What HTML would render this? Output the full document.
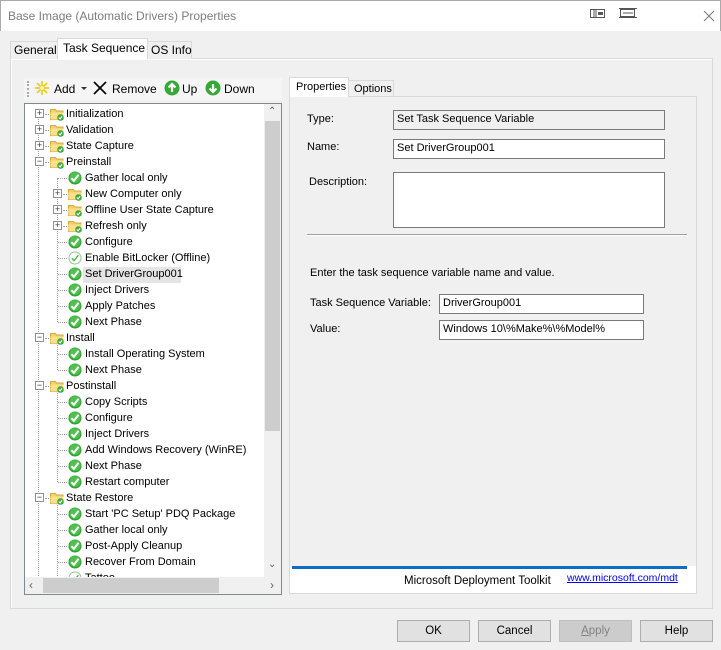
<!DOCTYPE html>
<html><head><meta charset="utf-8"><style>
*{box-sizing:border-box}
body{margin:0;width:721px;height:650px;background:#f0f0f0;font-family:"Liberation Sans",sans-serif;font-size:11px;color:#000;position:relative;overflow:hidden}
.a{position:absolute;white-space:nowrap}
.tb{left:0;top:0;width:721px;height:31px;background:#fff;border:1px solid #aaa;border-bottom:none}
.row{position:absolute;height:16px;line-height:16px;white-space:nowrap}
.box{position:absolute;width:9px;height:9px;border:1px solid #919191;background:#fff;font-size:9px;line-height:7px;text-align:center;color:#333}
.in{background:#fff;border:1px solid #7a7a7a;padding-left:3px;line-height:17px}
.btn{position:absolute;top:620px;width:73px;height:22px;border:1px solid #adadad;background:#e1e1e1;text-align:center;line-height:20px;font-size:11.5px}
.dl{position:absolute;border-left:1px dotted #a0a0a0}
.dh{position:absolute;border-top:1px dotted #a0a0a0;width:6px}
</style></head><body>
<svg width="0" height="0" style="position:absolute"><defs>
<symbol id="ck" viewBox="0 0 14 14"><circle cx="7" cy="7" r="6.5" fill="#2e9e2e"/><circle cx="7" cy="6.5" r="5.5" fill="#4cc24c"/><path d="M3.5 7.2l2.3 2.6 4.8-6" stroke="#fff" stroke-width="2" fill="none"/></symbol>
<symbol id="ck2" viewBox="0 0 14 14"><circle cx="7" cy="7" r="6" fill="#fff" stroke="#8fc88f"/><path d="M3.8 7.2l2.2 2.4 4.4-5.4" stroke="#4caf4c" stroke-width="1.3" fill="none"/></symbol>
<symbol id="fd" viewBox="0 0 14 14"><path d="M0.5 2.5h5l1 1.5h6.5v8.5h-12.5z" fill="#f2cf68" stroke="#d7a93a"/><path d="M0.5 5.5h13v7h-13z" fill="#fbe08a"/><circle cx="10.5" cy="10.5" r="3.3" fill="#3aaa3a"/><path d="M8.8 10.5l1.3 1.3 2-2.4" stroke="#fff" stroke-width="1.2" fill="none"/></symbol>
</defs></svg>
<div class="a tb"></div>
<div class="a" style="left:8px;top:9px;font-size:12px;color:#7d7d7d">Base Image (Automatic Drivers) Properties</div>
<svg class="a" style="left:590px;top:8px" width="16" height="12"><rect x="0.5" y="1.5" width="14" height="8" fill="none" stroke="#555"/><path d="M4 2v7M6 2v7" stroke="#555"/><rect x="8" y="4" width="5" height="3" fill="#555"/></svg>
<svg class="a" style="left:619px;top:7px" width="18" height="12"><rect x="1.5" y="2.5" width="14" height="7" fill="none" stroke="#555"/><path d="M0 1.5h18M0 10.5h18M4 6h10" stroke="#555"/></svg>
<svg class="a" style="left:703px;top:10px" width="12" height="12"><path d="M1 1l10 10M11 1l-10 10" stroke="#777"/></svg>
<div class="a" style="left:10px;top:58px;width:703px;height:551px;border:1px solid #d9d9d9;background:#f0f0f0;box-shadow:inset 1px 1px 0 #fff"></div>
<div class="a" style="left:10px;top:41px;width:48px;height:18px;border:1px solid #d9d9d9;border-bottom:none;background:#f0f0f0;line-height:17px;padding-left:3px;font-size:12px">General</div>
<div class="a" style="left:147px;top:41px;width:45px;height:18px;border:1px solid #d9d9d9;border-bottom:none;background:#f0f0f0;line-height:17px;padding-left:3px;font-size:12px">OS Info</div>
<div class="a" style="left:57px;top:38px;width:91px;height:21px;border:1px solid #d9d9d9;border-bottom:none;background:#fff;line-height:18px;padding-left:5px;font-size:12px">Task Sequence</div>
<div class="a" style="left:24px;top:78px;width:258px;height:22px;background:#f5f5f5"></div>
<div class="a" style="left:27px;top:81px;height:16px;border-left:2px dotted #aaa"></div>
<svg class="a" style="left:34px;top:80px" width="16" height="16"><path d="M8 1v14M1 8h14M3 3l10 10M13 3l-10 10" stroke="#e8c800" stroke-width="1.5"/><circle cx="8" cy="8" r="2" fill="#fff7a0"/></svg>
<div class="a" style="left:54px;top:82px;font-size:12px">Add</div>
<div class="a" style="left:81px;top:87px;border:3px solid transparent;border-top:3px solid #333"></div>
<svg class="a" style="left:93px;top:81px" width="14" height="14"><path d="M1 1l12 12M13 1l-12 12" stroke="#000" stroke-width="1.6"/></svg>
<div class="a" style="left:112px;top:82px;font-size:12px">Remove</div>
<svg class="a" style="left:164px;top:80px" width="16" height="16"><circle cx="8" cy="8" r="7.5" fill="#36a836"/><path d="M8 12V4M4.5 7.5L8 4l3.5 3.5" stroke="#fff" stroke-width="2.2" fill="none"/></svg>
<div class="a" style="left:182px;top:82px;font-size:12px">Up</div>
<svg class="a" style="left:205px;top:80px" width="16" height="16"><circle cx="8" cy="8" r="7.5" fill="#36a836"/><path d="M8 4v8M4.5 8.5L8 12l3.5-3.5" stroke="#fff" stroke-width="2.2" fill="none"/></svg>
<div class="a" style="left:224px;top:82px;font-size:12px">Down</div>
<div class="a" style="left:24px;top:103px;width:258px;height:492px;border:1px solid #828790;background:#fff;overflow:hidden">
<div class="a" style="left:0;top:0;width:240px;height:473px;overflow:hidden">
<div class="dl" style="left:13px;top:10px;height:470px"></div>
<div class="dl" style="left:32px;top:74px;height:144px"></div>
<div class="dl" style="left:32px;top:234px;height:32px"></div>
<div class="dl" style="left:32px;top:282px;height:96px"></div>
<div class="dl" style="left:32px;top:394px;height:80px"></div>
<div class="a" style="left:58px;top:163px;width:98px;height:16px;background:#e5e5e5"></div>
</div>
<div class="a" style="left:239px;top:0;width:17px;height:473px;background:#f0f0f0"></div>
<div class="a" style="left:240px;top:17px;width:15px;height:310px;background:#cdcdcd"></div>
<div class="a" style="left:243px;top:2px;font-size:10px;color:#606060">&#8963;</div>
<div class="a" style="left:243px;top:455px;font-size:10px;color:#606060">&#8964;</div>
<div class="a" style="left:0;top:473px;width:256px;height:17px;background:#f0f0f0"></div>
<div class="a" style="left:18px;top:474px;width:176px;height:15px;background:#cdcdcd"></div>
<div class="a" style="left:4px;top:474px;font-size:12px;color:#606060">&#8249;</div>
<div class="a" style="left:245px;top:474px;font-size:12px;color:#606060">&#8250;</div>
</div>
<div class="a" style="left:25px;top:104px;width:238px;height:473px;overflow:hidden">
<div class="row" style="top:2px;left:10px"><span class="box" style="left:0;top:3px">+</span><span class="dh" style="left:10px;top:8px"></span><svg class="a" style="left:15px;top:1px" width="14" height="14"><use href="#fd"/></svg><span class="a" style="left:31px">Initialization</span></div>
<div class="row" style="top:18px;left:10px"><span class="box" style="left:0;top:3px">+</span><span class="dh" style="left:10px;top:8px"></span><svg class="a" style="left:15px;top:1px" width="14" height="14"><use href="#fd"/></svg><span class="a" style="left:31px">Validation</span></div>
<div class="row" style="top:34px;left:10px"><span class="box" style="left:0;top:3px">+</span><span class="dh" style="left:10px;top:8px"></span><svg class="a" style="left:15px;top:1px" width="14" height="14"><use href="#fd"/></svg><span class="a" style="left:31px">State Capture</span></div>
<div class="row" style="top:50px;left:10px"><span class="box" style="left:0;top:3px">&minus;</span><span class="dh" style="left:10px;top:8px"></span><svg class="a" style="left:15px;top:1px" width="14" height="14"><use href="#fd"/></svg><span class="a" style="left:31px">Preinstall</span></div>
<div class="row" style="top:66px;left:33px"><span class="dh" style="left:0;top:8px;width:9px"></span><svg class="a" style="left:10px;top:1px" width="14" height="14"><use href="#ck"/></svg><span class="a" style="left:27px">Gather local only</span></div>
<div class="row" style="top:82px;left:28px"><span class="box" style="left:0;top:3px">+</span><span class="dh" style="left:10px;top:8px"></span><svg class="a" style="left:15px;top:1px" width="14" height="14"><use href="#fd"/></svg><span class="a" style="left:32px">New Computer only</span></div>
<div class="row" style="top:98px;left:28px"><span class="box" style="left:0;top:3px">+</span><span class="dh" style="left:10px;top:8px"></span><svg class="a" style="left:15px;top:1px" width="14" height="14"><use href="#fd"/></svg><span class="a" style="left:32px">Offline User State Capture</span></div>
<div class="row" style="top:114px;left:28px"><span class="box" style="left:0;top:3px">+</span><span class="dh" style="left:10px;top:8px"></span><svg class="a" style="left:15px;top:1px" width="14" height="14"><use href="#fd"/></svg><span class="a" style="left:32px">Refresh only</span></div>
<div class="row" style="top:130px;left:33px"><span class="dh" style="left:0;top:8px;width:9px"></span><svg class="a" style="left:10px;top:1px" width="14" height="14"><use href="#ck"/></svg><span class="a" style="left:27px">Configure</span></div>
<div class="row" style="top:146px;left:33px"><span class="dh" style="left:0;top:8px;width:9px"></span><svg class="a" style="left:10px;top:1px" width="14" height="14"><use href="#ck2"/></svg><span class="a" style="left:27px">Enable BitLocker (Offline)</span></div>
<div class="row" style="top:162px;left:33px"><span class="dh" style="left:0;top:8px;width:9px"></span><svg class="a" style="left:10px;top:1px" width="14" height="14"><use href="#ck"/></svg><span class="a" style="left:27px">Set DriverGroup001</span></div>
<div class="row" style="top:178px;left:33px"><span class="dh" style="left:0;top:8px;width:9px"></span><svg class="a" style="left:10px;top:1px" width="14" height="14"><use href="#ck"/></svg><span class="a" style="left:27px">Inject Drivers</span></div>
<div class="row" style="top:194px;left:33px"><span class="dh" style="left:0;top:8px;width:9px"></span><svg class="a" style="left:10px;top:1px" width="14" height="14"><use href="#ck"/></svg><span class="a" style="left:27px">Apply Patches</span></div>
<div class="row" style="top:210px;left:33px"><span class="dh" style="left:0;top:8px;width:9px"></span><svg class="a" style="left:10px;top:1px" width="14" height="14"><use href="#ck"/></svg><span class="a" style="left:27px">Next Phase</span></div>
<div class="row" style="top:226px;left:10px"><span class="box" style="left:0;top:3px">&minus;</span><span class="dh" style="left:10px;top:8px"></span><svg class="a" style="left:15px;top:1px" width="14" height="14"><use href="#fd"/></svg><span class="a" style="left:31px">Install</span></div>
<div class="row" style="top:242px;left:33px"><span class="dh" style="left:0;top:8px;width:9px"></span><svg class="a" style="left:10px;top:1px" width="14" height="14"><use href="#ck"/></svg><span class="a" style="left:27px">Install Operating System</span></div>
<div class="row" style="top:258px;left:33px"><span class="dh" style="left:0;top:8px;width:9px"></span><svg class="a" style="left:10px;top:1px" width="14" height="14"><use href="#ck"/></svg><span class="a" style="left:27px">Next Phase</span></div>
<div class="row" style="top:274px;left:10px"><span class="box" style="left:0;top:3px">&minus;</span><span class="dh" style="left:10px;top:8px"></span><svg class="a" style="left:15px;top:1px" width="14" height="14"><use href="#fd"/></svg><span class="a" style="left:31px">Postinstall</span></div>
<div class="row" style="top:290px;left:33px"><span class="dh" style="left:0;top:8px;width:9px"></span><svg class="a" style="left:10px;top:1px" width="14" height="14"><use href="#ck"/></svg><span class="a" style="left:27px">Copy Scripts</span></div>
<div class="row" style="top:306px;left:33px"><span class="dh" style="left:0;top:8px;width:9px"></span><svg class="a" style="left:10px;top:1px" width="14" height="14"><use href="#ck"/></svg><span class="a" style="left:27px">Configure</span></div>
<div class="row" style="top:322px;left:33px"><span class="dh" style="left:0;top:8px;width:9px"></span><svg class="a" style="left:10px;top:1px" width="14" height="14"><use href="#ck"/></svg><span class="a" style="left:27px">Inject Drivers</span></div>
<div class="row" style="top:338px;left:33px"><span class="dh" style="left:0;top:8px;width:9px"></span><svg class="a" style="left:10px;top:1px" width="14" height="14"><use href="#ck"/></svg><span class="a" style="left:27px">Add Windows Recovery (WinRE)</span></div>
<div class="row" style="top:354px;left:33px"><span class="dh" style="left:0;top:8px;width:9px"></span><svg class="a" style="left:10px;top:1px" width="14" height="14"><use href="#ck"/></svg><span class="a" style="left:27px">Next Phase</span></div>
<div class="row" style="top:370px;left:33px"><span class="dh" style="left:0;top:8px;width:9px"></span><svg class="a" style="left:10px;top:1px" width="14" height="14"><use href="#ck"/></svg><span class="a" style="left:27px">Restart computer</span></div>
<div class="row" style="top:386px;left:10px"><span class="box" style="left:0;top:3px">&minus;</span><span class="dh" style="left:10px;top:8px"></span><svg class="a" style="left:15px;top:1px" width="14" height="14"><use href="#fd"/></svg><span class="a" style="left:31px">State Restore</span></div>
<div class="row" style="top:402px;left:33px"><span class="dh" style="left:0;top:8px;width:9px"></span><svg class="a" style="left:10px;top:1px" width="14" height="14"><use href="#ck"/></svg><span class="a" style="left:27px">Start 'PC Setup' PDQ Package</span></div>
<div class="row" style="top:418px;left:33px"><span class="dh" style="left:0;top:8px;width:9px"></span><svg class="a" style="left:10px;top:1px" width="14" height="14"><use href="#ck"/></svg><span class="a" style="left:27px">Gather local only</span></div>
<div class="row" style="top:434px;left:33px"><span class="dh" style="left:0;top:8px;width:9px"></span><svg class="a" style="left:10px;top:1px" width="14" height="14"><use href="#ck"/></svg><span class="a" style="left:27px">Post-Apply Cleanup</span></div>
<div class="row" style="top:450px;left:33px"><span class="dh" style="left:0;top:8px;width:9px"></span><svg class="a" style="left:10px;top:1px" width="14" height="14"><use href="#ck"/></svg><span class="a" style="left:27px">Recover From Domain</span></div>
<div class="row" style="top:466px;left:33px"><span class="dh" style="left:0;top:8px;width:9px"></span><svg class="a" style="left:10px;top:1px" width="14" height="14"><use href="#ck2"/></svg><span class="a" style="left:27px">Tattoo</span></div>
</div>
<div class="a" style="left:289px;top:96px;width:408px;height:498px;border:1px solid #d9d9d9;background:#f0f0f0"></div>
<div class="a" style="left:348px;top:80px;width:46px;height:17px;border:1px solid #d9d9d9;border-bottom:none;line-height:16px;padding-left:5px">Options</div>
<div class="a" style="left:289px;top:77px;width:60px;height:20px;border:1px solid #d9d9d9;border-bottom:none;background:#fff;line-height:18px;padding-left:6px">Properties</div>
<div class="a" style="left:307px;top:113px">Type:</div>
<div class="a in" style="left:393px;top:110px;width:272px;height:20px;background:#f0f0f0">Set Task Sequence Variable</div>
<div class="a" style="left:307px;top:141px">Name:</div>
<div class="a in" style="left:393px;top:139px;width:272px;height:20px">Set DriverGroup001</div>
<div class="a" style="left:309px;top:176px">Description:</div>
<div class="a in" style="left:393px;top:172px;width:272px;height:56px"></div>
<div class="a" style="left:307px;top:234px;width:380px;border-top:1px solid #a0a0a0;border-bottom:1px solid #fff"></div>
<div class="a" style="left:310px;top:267px">Enter the task sequence variable name and value.</div>
<div class="a" style="left:310px;top:297px">Task Sequence Variable:</div>
<div class="a in" style="left:439px;top:294px;width:205px;height:20px">DriverGroup001</div>
<div class="a" style="left:310px;top:323px">Value:</div>
<div class="a in" style="left:439px;top:320px;width:205px;height:20px">Windows 10\%Make%\%Model%</div>
<div class="a" style="left:290px;top:566px;width:406px;height:27px;background:#fff"></div>
<div class="a" style="left:292px;top:566px;width:395px;height:3px;background:#0b6fc8"></div>
<div class="a" style="left:404px;top:575px;font-size:11.5px">Microsoft Deployment Toolkit</div>
<div class="a" style="left:567px;top:572px;color:#00f;text-decoration:underline;font-size:10.5px">www.microsoft.com/mdt</div>
<div class="btn" style="left:397px">OK</div>
<div class="btn" style="left:478px">Cancel</div>
<div class="btn" style="left:559px;background:#cccccc;border-color:#bfbfbf;color:#838383"><u>A</u>pply</div>
<div class="btn" style="left:640px">Help</div>
</body></html>
